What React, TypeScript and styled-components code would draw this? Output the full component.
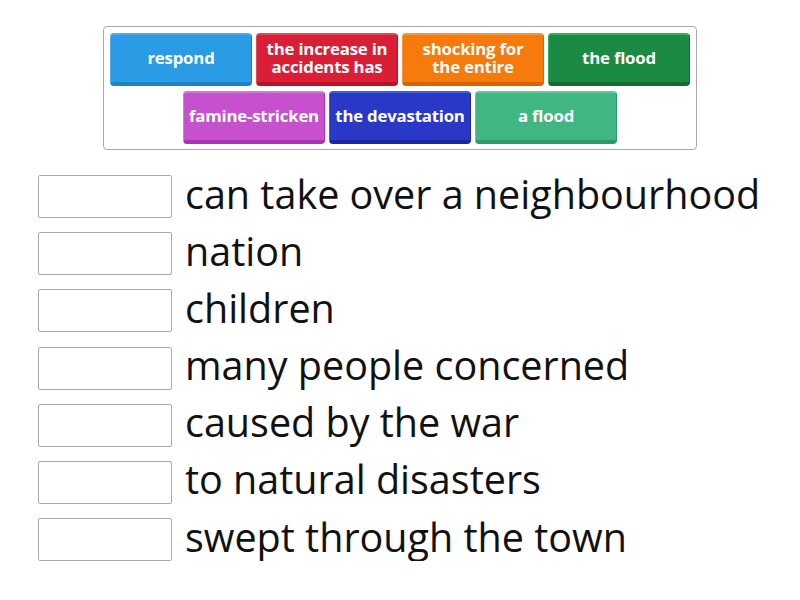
import React from 'react';
import styled, { createGlobalStyle } from 'styled-components';

const GlobalStyle = createGlobalStyle`
    html, body {
        margin: 0;
        padding: 0;
        background: #ffffff;
        font-family: "Open Sans", "Noto Sans", sans-serif;
    }
`;

type Tile = {
    label: string;
    color: string;
    light: string;
    dark: string;
};

const tiles: Tile[][] = [
    [
        { label: 'respond', color: '#2b9be5', light: '#4aaef0', dark: '#1d82c8' },
        { label: 'the increase in accidents has', color: '#d81f36', light: '#e4475a', dark: '#b5142a' },
        { label: 'shocking for the entire', color: '#f67a0c', light: '#fb9638', dark: '#d86404' },
        { label: 'the flood', color: '#1d8a43', light: '#2fb45b', dark: '#126c32' },
    ],
    [
        { label: 'famine-stricken', color: '#c750cf', light: '#d577dc', dark: '#a834b0' },
        { label: 'the devastation', color: '#2a38c8', light: '#4a58e0', dark: '#1c27a0' },
        { label: 'a flood', color: '#40b783', light: '#62c99b', dark: '#2e9a6b' },
    ],
];

const prompts = [
    'can take over a neighbourhood',
    'nation',
    'children',
    'many people concerned',
    'caused by the war',
    'to natural disasters',
    'swept through the town',
];

const Page = styled.div`
    display: flex;
    flex-direction: column;
    align-items: flex-start;
    padding: 26px 0 0 38px;
`;

const Bank = styled.div`
    margin-left: 65px;
    width: 592px;
    border: 1px solid #a9a9a9;
    border-radius: 4px;
    padding: 6px 0 5px;
    display: flex;
    flex-direction: column;
    gap: 5px;
`;

const TileRow = styled.div`
    display: flex;
    justify-content: center;
    gap: 4px;
`;

const TileBox = styled.div<{ $color: string; $light: string; $dark: string }>`
    box-sizing: border-box;
    width: 142px;
    height: 53px;
    background: ${({ $color }) => $color};
    border-top: 2px solid ${({ $light }) => $light};
    border-left: 1px solid ${({ $light }) => $light};
    border-right: 1px solid ${({ $dark }) => $dark};
    border-bottom: 4px solid ${({ $dark }) => $dark};
    border-radius: 4px;
    color: #ffffff;
    font-weight: 700;
    font-size: 16.8px;
    line-height: 18px;
    text-align: center;
    display: flex;
    align-items: center;
    justify-content: center;
    padding: 0 4.5px 1px;
    letter-spacing: -0.2px;
`;

const Targets = styled.div`
    margin-top: 25px;
    display: flex;
    flex-direction: column;
    gap: 14.2px;
`;

const TargetRow = styled.div`
    display: flex;
    align-items: center;
    gap: 13px;
    height: 43px;
`;

const Slot = styled.div`
    box-sizing: border-box;
    width: 134px;
    height: 43px;
    border: 1px solid #a9a9a9;
    border-radius: 2px;
    background: #ffffff;
`;

const Prompt = styled.span`
    font-size: 39.5px;
    color: #111111;
    line-height: 43px;
    white-space: nowrap;
    margin-top: -5px;
`;

export default function App() {
    return (
        <>
            <GlobalStyle />
            <Page>
                <Bank>
                    {tiles.map((row, i) => (
                        <TileRow key={i}>
                            {row.map((t) => (
                                <TileBox key={t.label} $color={t.color} $light={t.light} $dark={t.dark}>
                                    {t.label}
                                </TileBox>
                            ))}
                        </TileRow>
                    ))}
                </Bank>
                <Targets>
                    {prompts.map((p) => (
                        <TargetRow key={p}>
                            <Slot />
                            <Prompt>{p}</Prompt>
                        </TargetRow>
                    ))}
                </Targets>
            </Page>
        </>
    );
}
